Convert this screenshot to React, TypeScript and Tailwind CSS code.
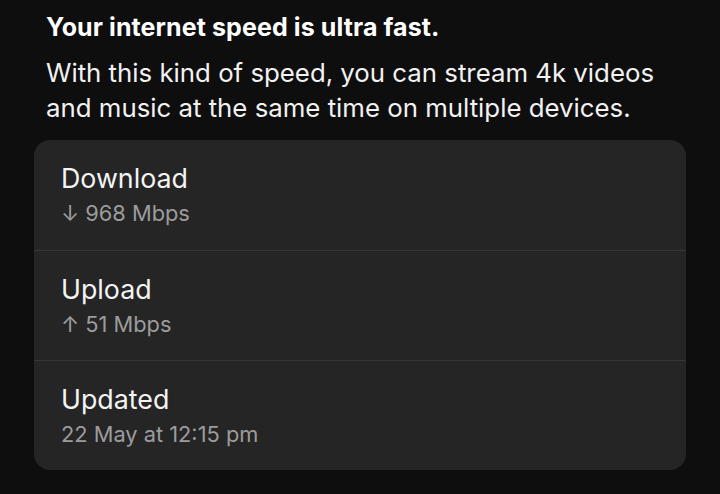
import React from "react";

const rows = [
  { label: "Download", value: "↓ 968 Mbps" },
  { label: "Upload", value: "↑ 51 Mbps" },
  { label: "Updated", value: "22 May at 12:15 pm" },
];

export default function App() {
  return (
    <div
      className="w-[720px] h-[494px] bg-[#0e0e0e] text-white overflow-hidden"
      style={{ fontFamily: "Inter, 'Noto Sans', sans-serif" }}
    >
      <div className="px-[46px] pt-[12px]">
        <h1 className="text-[25px] leading-[30px] font-bold tracking-[0.1px]">Your internet speed is ultra fast.</h1>
        <p className="mt-[13px] text-[25.8px] leading-[35px] text-[#f2f2f2]">
          With this kind of speed, you can stream 4k videos
          <br />
          and music at the same time on multiple devices.
        </p>
      </div>
      <div className="mx-[34px] mt-[15px] rounded-[16px] bg-[#252525] overflow-hidden">
        {rows.map((r, i) => (
          <div
            key={r.label}
            className={`h-[110px] px-[27px] flex flex-col justify-center ${i > 0 ? "border-t border-[#363636]" : ""}`}
          >
            <div className="text-[26.8px] leading-[32px] text-[#f4f4f4]">{r.label}</div>
            <div className="text-[21.8px] leading-[30px] text-[#9c9c9c] mt-[4px]">{r.value}</div>
          </div>
        ))}
      </div>
    </div>
  );
}
